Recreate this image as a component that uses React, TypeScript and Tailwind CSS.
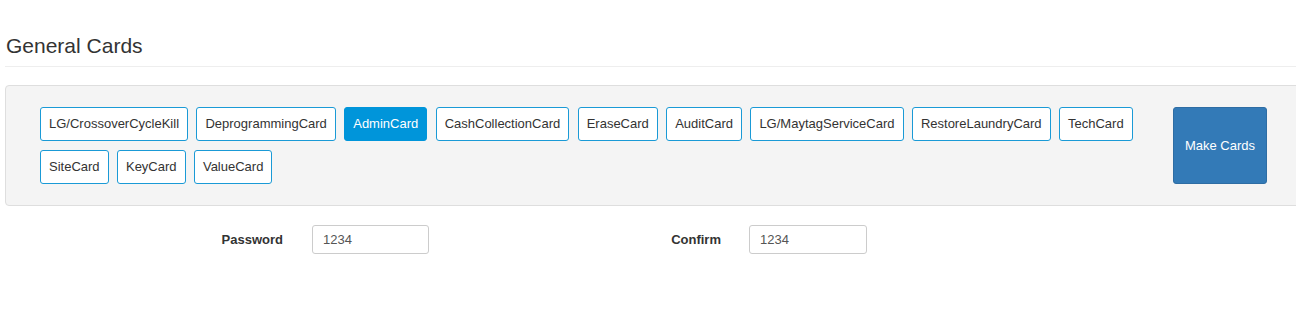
import React from "react";

const cards = [
  "LG/CrossoverCycleKill",
  "DeprogrammingCard",
  "AdminCard",
  "CashCollectionCard",
  "EraseCard",
  "AuditCard",
  "LG/MaytagServiceCard",
  "RestoreLaundryCard",
  "TechCard",
  "SiteCard",
  "KeyCard",
  "ValueCard",
];

export default function App() {
  return (
    <div
      className="w-full h-[311px] overflow-hidden bg-white text-[#333]"
      style={{ fontFamily: '"Liberation Sans", Arial, sans-serif' }}
    >
      <div className="w-[1320px] pt-[34px]">
        <h3 className="ml-[6px] text-[21px] leading-[23px] font-normal text-[#333]">General Cards</h3>
        <div className="ml-[5px] mt-[9px] h-px bg-[#eeeeee]" />
        <div className="ml-[5px] mt-[18px] w-[1310px] rounded-[4px] border border-[#dedede] bg-[#f4f4f4] pl-[34px] py-[21px] flex items-start">
          <div className="w-[1110px] flex flex-wrap gap-x-[8.4px] gap-y-[9px]">
            {cards.map((c) => {
              const active = c === "AdminCard";
              return (
                <button
                  key={c}
                  className={
                    "h-[34px] px-[8px] pb-[1px] rounded-[3px] border text-[13px] leading-none " +
                    (active
                      ? "bg-[#0095da] border-[#0095da] text-white"
                      : "bg-white border-[#1a9ad6] text-[#333]")
                  }
                >
                  {c}
                </button>
              );
            })}
          </div>
          <button className="ml-[23px] w-[94px] h-[77px] rounded-[3px] bg-[#337ab7] border border-[#2e6da4] text-white text-[13px]">
            Make Cards
          </button>
        </div>
        <div className="mt-[19px] flex items-center h-[29px]">
          <div className="w-[283px] text-right font-bold text-[13px] text-[#333]">Password</div>
          <input
            readOnly
            value="1234"
            className="ml-[29px] w-[117px] h-[29px] rounded-[3px] border border-[#cccccc] bg-white px-[10px] text-[13px] text-[#555] outline-none"
          />
          <div className="w-[292px] text-right font-bold text-[13px] text-[#333]">Confirm</div>
          <input
            readOnly
            value="1234"
            className="ml-[28px] w-[118px] h-[29px] rounded-[3px] border border-[#cccccc] bg-white px-[10px] text-[13px] text-[#555] outline-none"
          />
        </div>
      </div>
    </div>
  );
}
